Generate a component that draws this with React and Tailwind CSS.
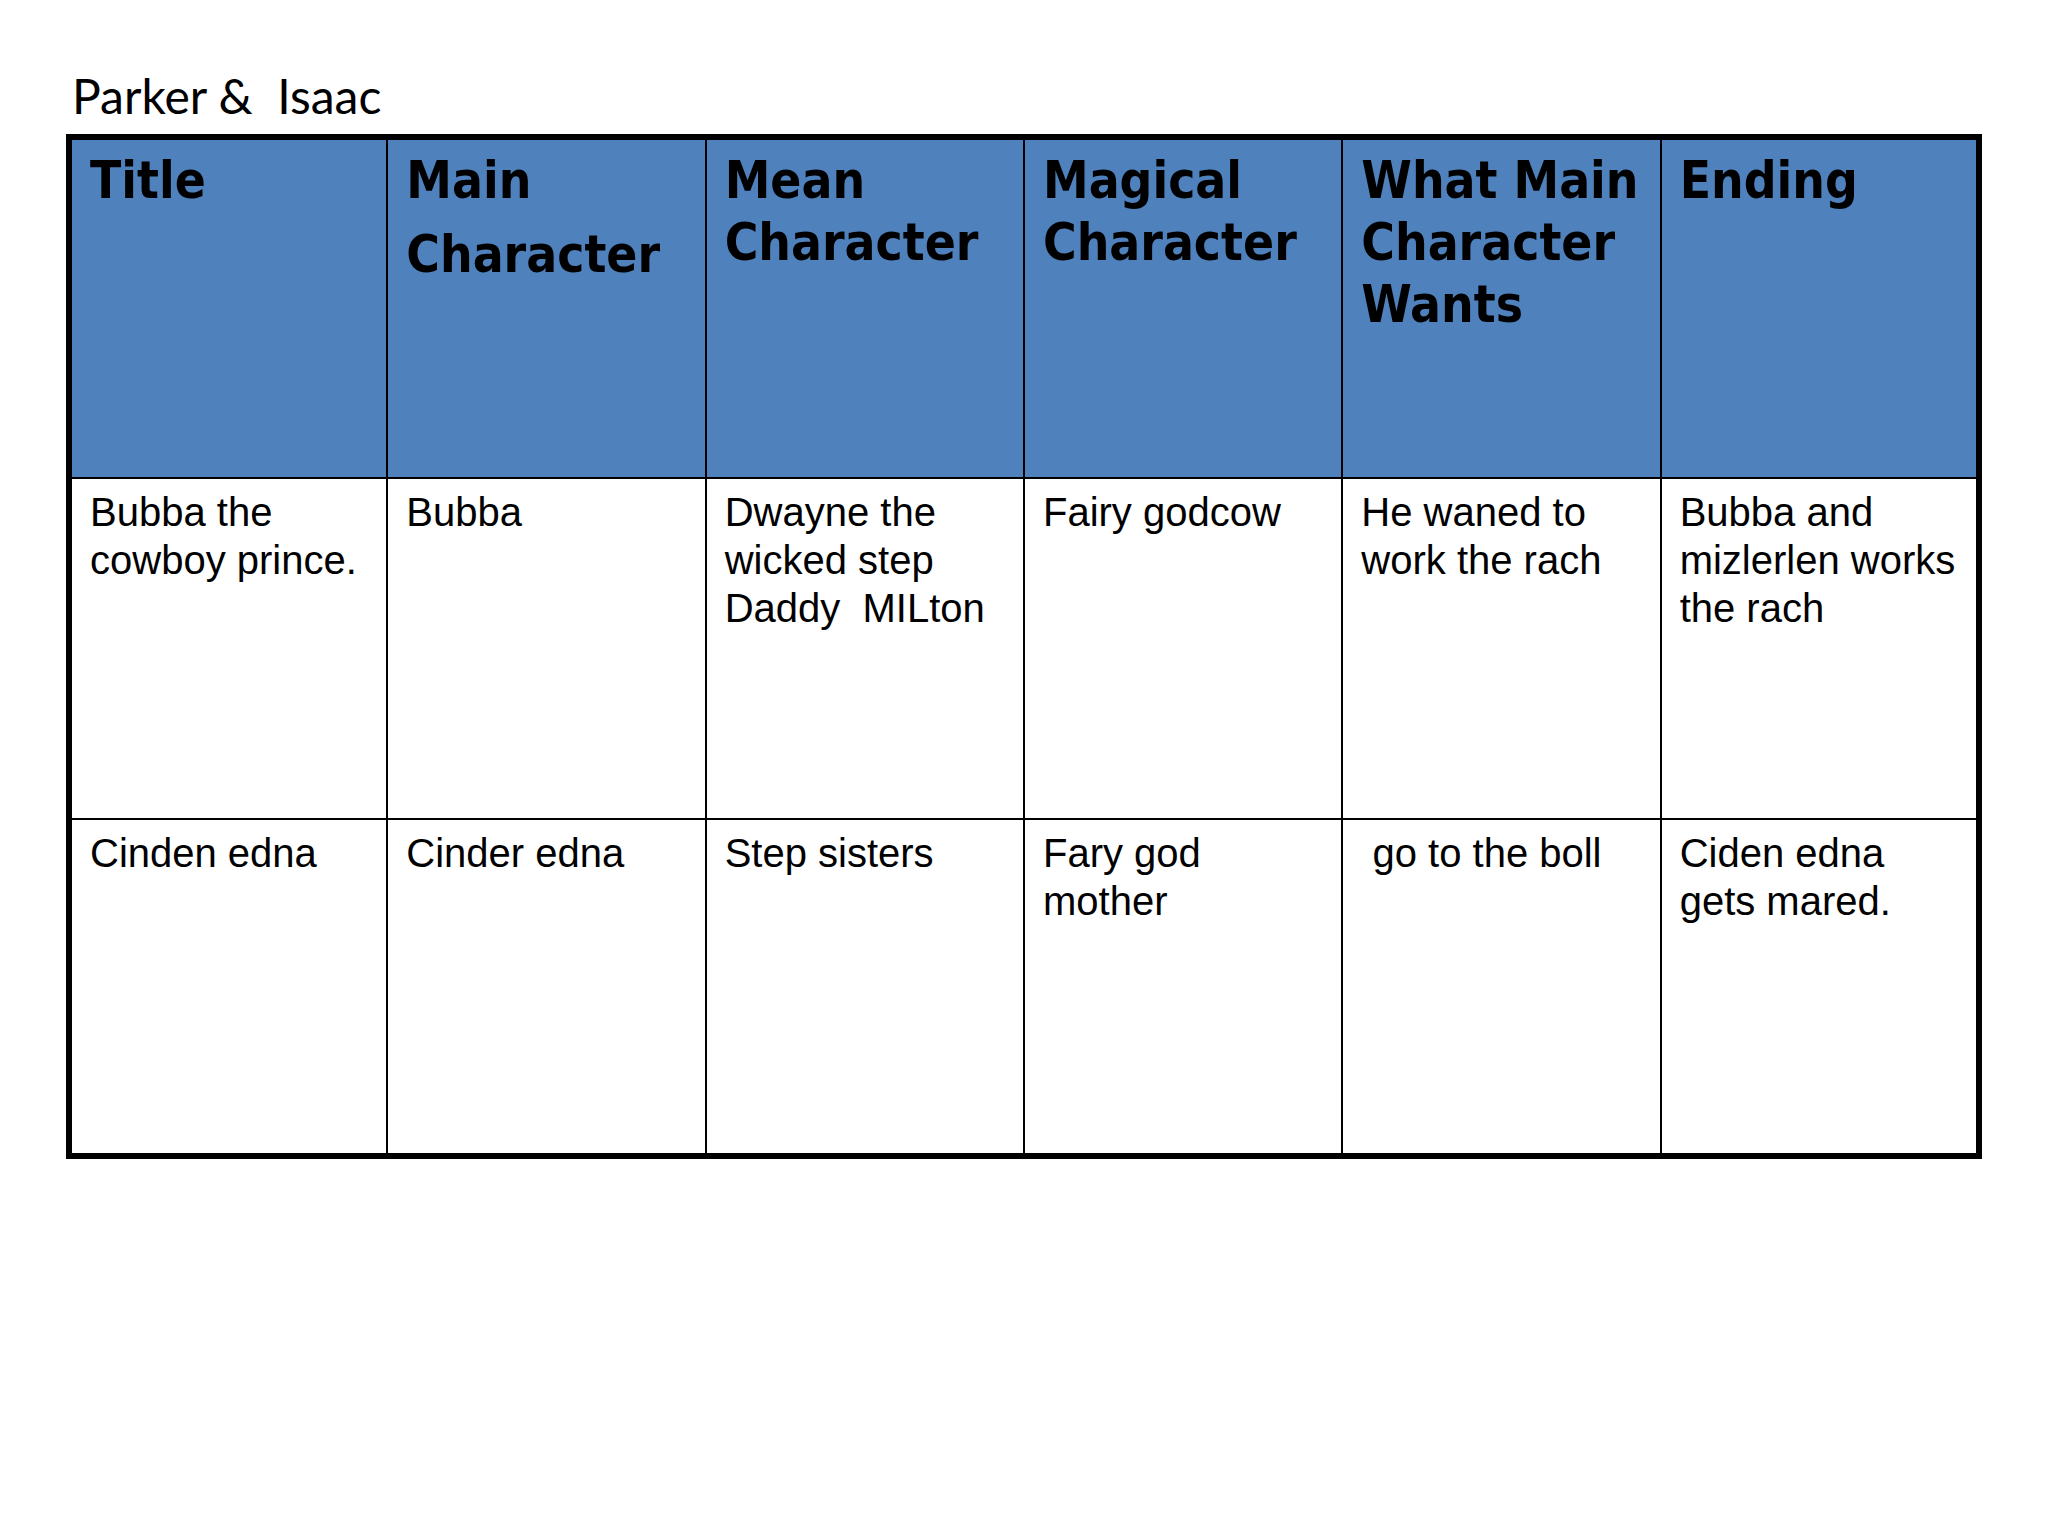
import React from "react";

const headers = [
  ["Title"],
  ["Main", "Character"],
  ["Mean Character"],
  ["Magical Character"],
  ["What Main Character Wants"],
  ["Ending"],
];

const rows = [
  [
    "Bubba the cowboy prince.",
    "Bubba",
    "Dwayne the wicked step Daddy  MILton",
    "Fairy godcow",
    "He waned to work the rach",
    "Bubba and mizlerlen works the rach",
  ],
  [
    "Cinden edna",
    "Cinder edna",
    "Step sisters",
    "Fary god mother",
    " go to the boll",
    "Ciden edna gets mared.",
  ],
];

const App = () => {
  return (
    <div className="w-[2048px] h-[1536px] bg-white relative overflow-hidden">
      <div className="pt-[68px] pl-[72px] h-[134px] box-border">
        <p className="font-['Lato','Open_Sans',sans-serif] text-[48px] leading-[56px] text-black whitespace-pre">
          Parker &  Isaac
        </p>
      </div>
      <table className="ml-[66px] w-[1916px] table-fixed border-collapse border-[6px] border-black">
        <thead>
          <tr className="h-[341px]">
            {headers.map((h, i) => (
              <th
                key={i}
                className="bg-[#4f81bd] border-2 border-black align-top text-left px-[18px] pt-[10px] font-['DejaVu_Sans_Condensed','DejaVu_Sans',sans-serif] [font-stretch:condensed] font-bold text-[51px] leading-[62px] text-black"
              >
                {h.length === 2 ? (
                  <>
                    <div>{h[0]}</div>
                    <div className="mt-[12px]">{h[1]}</div>
                  </>
                ) : (
                  <div>{h[0]}</div>
                )}
              </th>
            ))}
          </tr>
        </thead>
        <tbody>
          {rows.map((r, ri) => (
            <tr key={ri} className={ri === 0 ? "h-[341px]" : "h-[337px]"}>
              {r.map((c, ci) => (
                <td
                  key={ci}
                  className="border-2 border-black align-top px-[18px] pt-[9px] font-['Liberation_Sans',Arial,sans-serif] text-[40px] leading-[48px] text-black whitespace-pre-wrap"
                >
                  {c}
                </td>
              ))}
            </tr>
          ))}
        </tbody>
      </table>
    </div>
  );
};

export default App;
